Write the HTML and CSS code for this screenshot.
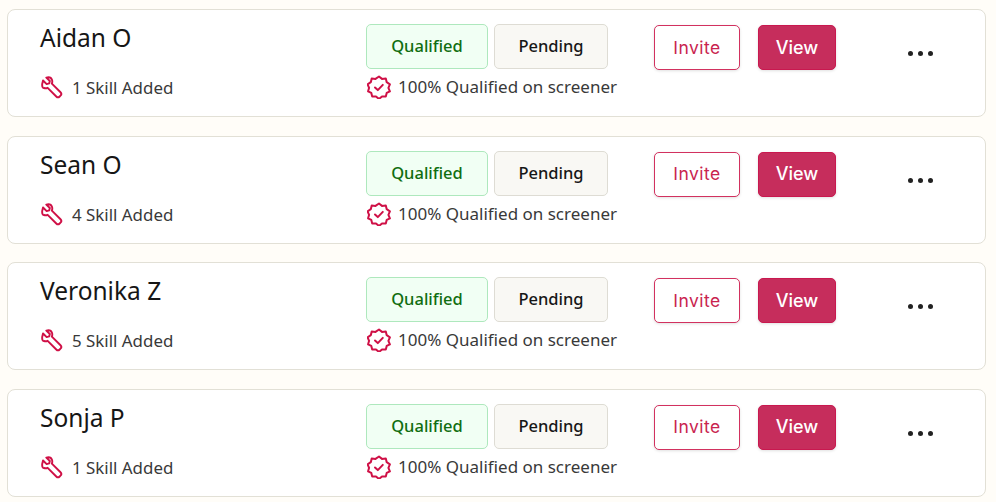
FILE: index.html
```html
<!DOCTYPE html>
<html>
<head>
	<meta charset="UTF-8">
	<title>Candidates</title>
	<link rel="stylesheet" href="styles.css">
</head>
<body>
	<svg class="defs" width="0" height="0">
		<symbol id="wrench" viewBox="0 0 24 24">
			<path d="M4.2 3.6 8 7.4l2.600-.7.7-2.600-3.700-3.500c2.600-.7 5.200.1 6 2.600.4 1.300.3 2.500-.2 3.700l9 9c1 1 1 2.500 0 3.500l-.9.9c-1 1-2.500 1-3.500 0l-9-9c-1.200.5-2.400.6-3.700.2C3.800 12 3 9.600 3.400 7z" transform="translate(-1 1) scale(.96)"/>
		</symbol>
		<symbol id="badge" viewBox="0 0 24 24">
			<path d="M12 1.500l3 2.400 3.800-.4.900 3.700 3.200 2.100-1.500 3.500 1.500 3.500-3.200 1.600-.9 3.700-3.800-.2-3 2.600-3-2.600-3.800.2-.9-3.700-3.200-1.600L2.100 12.800.6 9.300l3.200-2.100.9-3.700 3.800.4z"/>
			<path d="M8 12.500l2.800 2.600 5-5.200"/>
		</symbol>
	</svg>

	<div class="list">
		<div class="card">
			<div class="person">
				<div class="name">Aidan O</div>
				<div class="note"><svg class="icon wrench"><use href="#wrench"/></svg>1 Skill Added</div>
			</div>
			<div class="status">
				<div class="tags">
					<span class="tag qualified">Qualified</span>
					<span class="tag pending">Pending</span>
				</div>
				<div class="note"><svg class="icon badge"><use href="#badge"/></svg>100% Qualified on screener</div>
			</div>
			<div class="actions">
				<button type="button" class="btn invite">Invite</button>
				<button type="button" class="btn view">View</button>
				<div class="more"><i></i><i></i><i></i></div>
			</div>
		</div>
		<div class="card">
			<div class="person">
				<div class="name">Sean O</div>
				<div class="note"><svg class="icon wrench"><use href="#wrench"/></svg>4 Skill Added</div>
			</div>
			<div class="status">
				<div class="tags">
					<span class="tag qualified">Qualified</span>
					<span class="tag pending">Pending</span>
				</div>
				<div class="note"><svg class="icon badge"><use href="#badge"/></svg>100% Qualified on screener</div>
			</div>
			<div class="actions">
				<button type="button" class="btn invite">Invite</button>
				<button type="button" class="btn view">View</button>
				<div class="more"><i></i><i></i><i></i></div>
			</div>
		</div>
		<div class="card">
			<div class="person">
				<div class="name">Veronika Z</div>
				<div class="note"><svg class="icon wrench"><use href="#wrench"/></svg>5 Skill Added</div>
			</div>
			<div class="status">
				<div class="tags">
					<span class="tag qualified">Qualified</span>
					<span class="tag pending">Pending</span>
				</div>
				<div class="note"><svg class="icon badge"><use href="#badge"/></svg>100% Qualified on screener</div>
			</div>
			<div class="actions">
				<button type="button" class="btn invite">Invite</button>
				<button type="button" class="btn view">View</button>
				<div class="more"><i></i><i></i><i></i></div>
			</div>
		</div>
		<div class="card">
			<div class="person">
				<div class="name">Sonja P</div>
				<div class="note"><svg class="icon wrench"><use href="#wrench"/></svg>1 Skill Added</div>
			</div>
			<div class="status">
				<div class="tags">
					<span class="tag qualified">Qualified</span>
					<span class="tag pending">Pending</span>
				</div>
				<div class="note"><svg class="icon badge"><use href="#badge"/></svg>100% Qualified on screener</div>
			</div>
			<div class="actions">
				<button type="button" class="btn invite">Invite</button>
				<button type="button" class="btn view">View</button>
				<div class="more"><i></i><i></i><i></i></div>
			</div>
		</div>
	</div>
</body>
</html>
```

FILE: styles.css
```css
html, body {
	margin: 0;
	height: 100%;
	overflow: hidden;
}
body {
	background: #fffdf8;
	color: #1c1c1c;
	font-family: "Noto Sans", sans-serif;
}
.defs {
	display: block;
	height: 0;
}
.list {
	display: flex;
	flex-direction: column;
	gap: 18.5px;
	margin: 9px 10px 0 6.500px;
}
.card {
	box-sizing: border-box;
	display: flex;
	height: 108px;
	background: #fff;
	border: 1px solid #e2e0d6;
	border-radius: 8px;
}
.person {
	display: flex;
	flex-direction: column;
	justify-content: space-between;
	box-sizing: border-box;
	width: 358.500px;
	padding: 12px 0 16px 32.500px;
}
.name {
	font-size: 24.500px;
	line-height: 32px;
	color: #161616;
}
.note {
	display: flex;
	align-items: center;
	font-size: 17px;
	line-height: 24px;
	color: #393939;
}
.person .note {
	font-size: 16.900px;
}
.icon {
	width: 24px;
	height: 24px;
	margin-right: 8px;
	fill: none;
	stroke: #cf1046;
	stroke-width: 2;
	stroke-linejoin: round;
	stroke-linecap: round;
}
.status {
	display: flex;
	flex-direction: column;
	width: 288px;
	padding-top: 14px;
}
.status .note {
	margin-top: 6px;
}
.status .icon {
	margin-left: 1px;
	margin-right: 7px;
}
.tags {
	display: flex;
	gap: 6px;
}
.tag {
	box-sizing: border-box;
	height: 45px;
	display: flex;
	align-items: center;
	justify-content: center;
	padding-bottom: 2px;
	border-radius: 5px;
	font-size: 16.500px;
	font-weight: 500;
}
.qualified {
	width: 122px;
	background: #f1fff4;
	border: 1px solid #aee8bd;
	color: #106e10;
}
.pending {
	width: 114px;
	background: #f9f8f4;
	border: 1px solid #dedcd4;
	color: #161616;
}
.actions {
	display: flex;
	align-items: flex-start;
	padding-top: 15px;
}
.btn {
	box-sizing: border-box;
	height: 45px;
	padding-bottom: 2px;
	border-radius: 5px;
	font-family: Inter, sans-serif;
	font-size: 18px;
	box-shadow: 0 1px 3px rgba(0, 0, 0, .12);
}
.invite {
	width: 86px;
	background: #fff;
	border: 1px solid #d2315f;
	color: #c9244f;
	font-size: 17.500px;
	font-weight: 400;
	letter-spacing: .5px;
}
.view {
	width: 78px;
	margin-left: 18px;
	background: #c62d5c;
	border: 1px solid #c9184f;
	color: #fff;
	font-weight: 500;
}
.more {
	display: flex;
	gap: 5px;
	margin: 26px 0 0 72px;
}
.more i {
	width: 5px;
	height: 5px;
	border-radius: 50%;
	background: #222;
}
```
